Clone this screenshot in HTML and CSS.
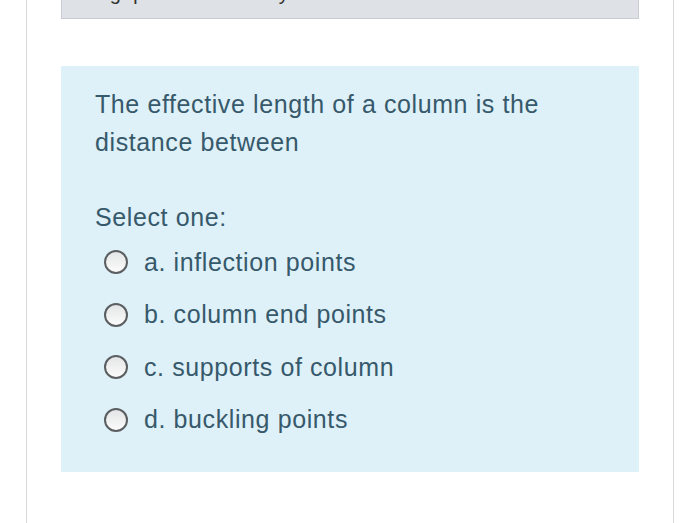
FILE: index.html
```html
<!DOCTYPE html>
<html>
<head>
<meta charset="utf-8">
<link rel="stylesheet" href="styles.css">
</head>
<body>
<div class="card">
  <div class="info">
    <div class="info-text">Flag question &nbsp; · &nbsp; Not yet answered</div>
  </div>
  <div class="qtext-box">
    <div class="qtext">The effective length of a column is the distance between</div>
    <div class="prompt">Select one:</div>
    <div class="answers">
      <label class="option"><span class="radio"></span><span>a. inflection points</span></label>
      <label class="option"><span class="radio"></span><span>b. column end points</span></label>
      <label class="option"><span class="radio"></span><span>c. supports of column</span></label>
      <label class="option"><span class="radio"></span><span>d. buckling points</span></label>
    </div>
  </div>
</div>
</body>
</html>
```
FILE: styles.css
```css
html, body {
  margin: 0;
  padding: 0;
  background: #ffffff;
}
body {
  font-family: "Liberation Sans", Arial, sans-serif;
  height: 523px;
  overflow: hidden;
}
.card {
  margin: 0 26px;
  height: 523px;
  border-left: 1px solid #d9d9d9;
  border-right: 1px solid #d9d9d9;
  padding: 0 34px;
  box-sizing: border-box;
}
.info {
  height: 19px;
  background: #dee1e5;
  border: 1px solid #c9ccd1;
  border-top: none;
  box-sizing: border-box;
  overflow: hidden;
  display: flex;
  align-items: flex-end;
}
.info-text {
  font-size: 20px;
  line-height: 20px;
  color: #333;
  margin: 0 0 15px 20px;
}
.qtext-box {
  margin-top: 47px;
  height: 406px;
  background: #def0f8;
  padding: 19px 34px 0 34px;
  box-sizing: border-box;
  color: #36596b;
  font-size: 25px;
  letter-spacing: 0.6px;
}
.qtext {
  line-height: 38px;
  width: 470px;
}
.prompt {
  line-height: 38px;
  margin-top: 37px;
}
.answers {
  display: flex;
  flex-direction: column;
}
.option {
  display: flex;
  align-items: center;
  height: 52.5px;
  gap: 16px;
  padding-left: 9px;
}
.radio {
  width: 24px;
  height: 24px;
  border-radius: 50%;
  border: 2px solid #5b5e60;
  box-sizing: border-box;
  background: linear-gradient(#e4e5e6, #fbfbfb);
  flex: none;
}
```
